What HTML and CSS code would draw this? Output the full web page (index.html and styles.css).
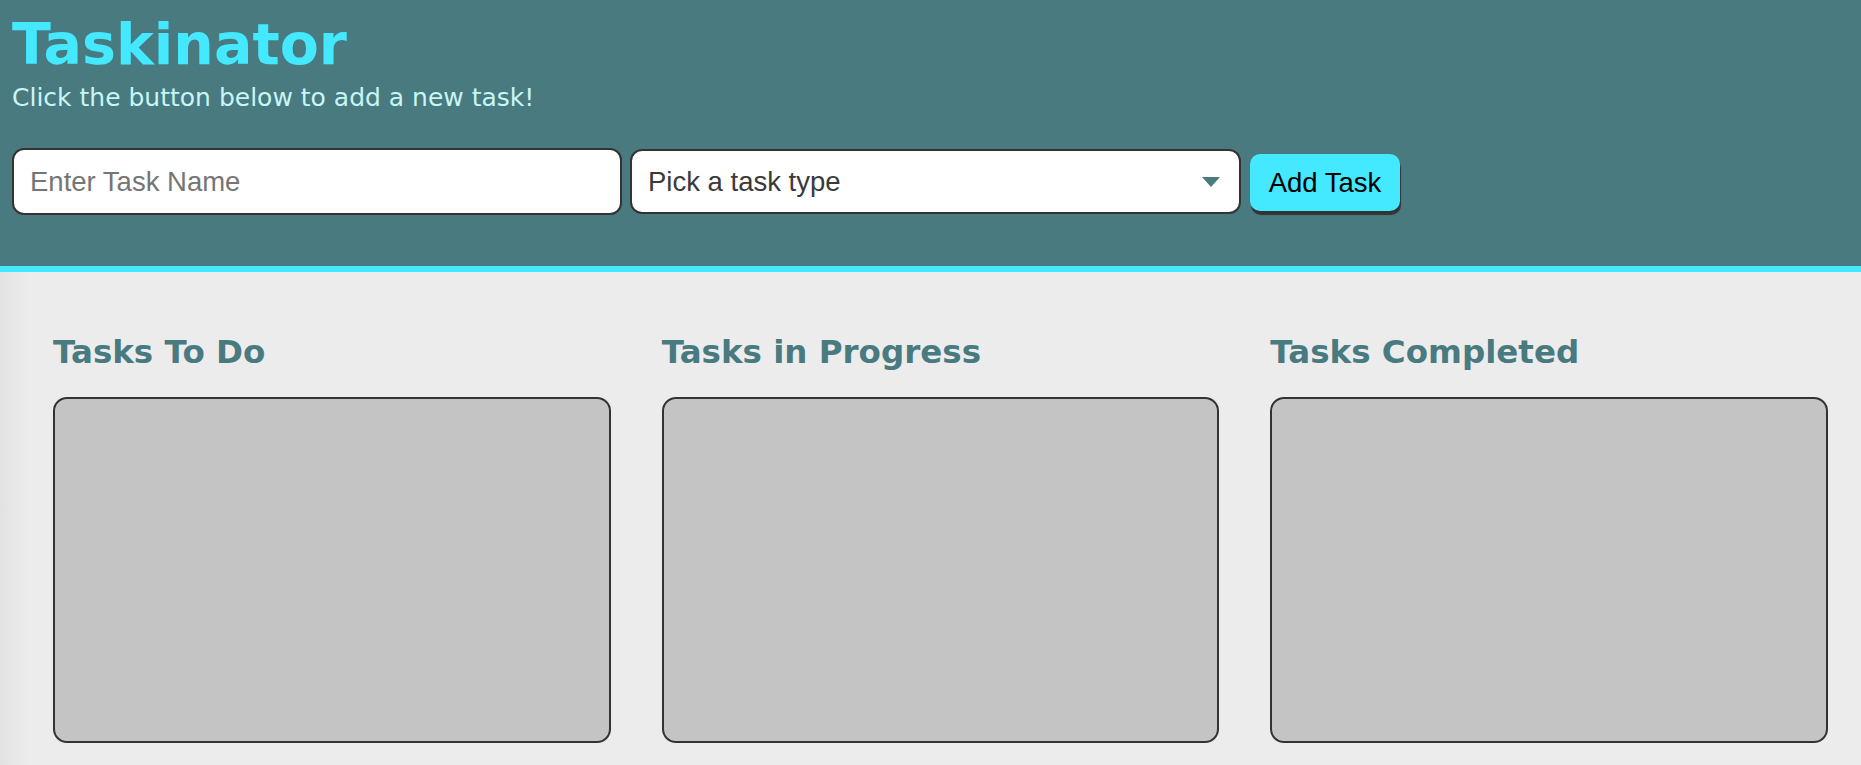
FILE: index.html
```html
<!DOCTYPE html>
<html lang="en">
<head>
<meta charset="utf-8">
<title>Taskinator</title>
<link rel="stylesheet" href="styles.css">
</head>
<body>
<header class="page-header">
  <h1 class="page-title">Taskinator</h1>
  <p class="page-subtitle">Click the button below to add a new task!</p>
  <form class="task-form">
    <input class="task-input" type="text" name="task-name" placeholder="Enter Task Name">
    <div class="select-wrap">
      <select class="task-select" name="task-type">
        <option value="" selected disabled>Pick a task type</option>
        <option value="Web">Web</option>
        <option value="Mobile">Mobile</option>
        <option value="Print">Print</option>
      </select>
      <svg class="select-arrow" width="18" height="10" viewBox="0 0 18 10" aria-hidden="true"><polygon points="0,0 18,0 9,10" fill="#487a80"/></svg>
    </div>
    <button class="btn" type="submit">Add Task</button>
  </form>
</header>
<main class="page-content">
  <section class="task-list-wrapper">
    <h2 class="list-title">Tasks To Do</h2>
    <ul class="task-list"></ul>
  </section>
  <section class="task-list-wrapper">
    <h2 class="list-title">Tasks in Progress</h2>
    <ul class="task-list"></ul>
  </section>
  <section class="task-list-wrapper">
    <h2 class="list-title">Tasks Completed</h2>
    <ul class="task-list"></ul>
  </section>
</main>
</body>
</html>
```
FILE: styles.css
```css
* {
  box-sizing: border-box;
}

html, body {
  margin: 0;
  padding: 0;
  height: 100%;
}

body {
  font-family: "DejaVu Sans", Verdana, sans-serif;
  background: linear-gradient(to right, #e2e2e2 0, #ececec 30px) #ececec;
  overflow: hidden;
}

.page-header {
  background-color: #487a80;
  border-bottom: 6px solid #44e8ff;
  padding: 11px 12px 51px 12px;
}

.page-title {
  margin: 0;
  font-size: 57px;
  font-weight: bold;
  line-height: normal;
  color: #44e8ff;
}

.page-subtitle {
  margin: 6px 0 0 0;
  font-size: 25px;
  line-height: normal;
  color: #c8f6f6;
}

.task-form {
  display: flex;
  align-items: center;
  gap: 8px;
  margin-top: 36px;
}

.task-input {
  width: 610px;
  height: 67px;
  border: 2px solid #333;
  border-radius: 12px;
  background: #fff;
  padding: 0 16px;
  font-family: "Liberation Sans", Arial, sans-serif;
  font-size: 27.5px;
  color: #333;
  outline: none;
}

.task-input::placeholder {
  color: #757575;
}

.select-wrap {
  position: relative;
  width: 611px;
  height: 65px;
}

.task-select {
  width: 100%;
  height: 100%;
  appearance: none;
  -webkit-appearance: none;
  border: 2px solid #333;
  border-radius: 12px;
  background: #fff;
  padding: 0 16px;
  font-family: "Liberation Sans", Arial, sans-serif;
  font-size: 27.5px;
  color: #3a3a3a;
  outline: none;
}

.select-arrow {
  position: absolute;
  right: 21px;
  top: 28px;
  pointer-events: none;
}

.btn {
  width: 150px;
  height: 57px;
  margin-left: 1px;
  margin-top: 2px;
  border: none;
  border-radius: 10px;
  background-color: #44e8ff;
  color: #000;
  font-family: "Liberation Sans", Arial, sans-serif;
  font-size: 27.5px;
  box-shadow: 1px 4px 1px #333;
  cursor: pointer;
  padding: 0;
}

.page-content {
  display: grid;
  grid-template-columns: repeat(3, 1fr);
  column-gap: 51px;
  padding: 0 33px 0 53px;
}

.task-list-wrapper {
  display: flex;
  flex-direction: column;
}

.list-title {
  margin: 61px 0 26px 0;
  font-size: 32.5px;
  font-weight: bold;
  line-height: normal;
  color: #487a80;
}

.task-list {
  margin: 0;
  padding: 0;
  list-style: none;
  height: 346px;
  background-color: #c4c4c4;
  border: 2px solid #333;
  border-radius: 14px;
}
```
